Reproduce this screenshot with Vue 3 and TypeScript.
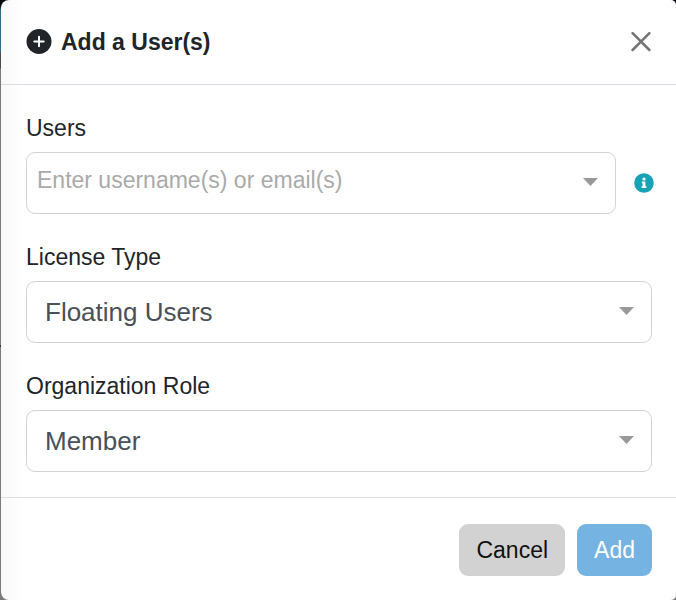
<script setup lang="ts">
import { ref } from 'vue'

const users = ref('')
const licenseType = ref('Floating Users')
const role = ref('Member')
const licenseTypes: string[] = ['Floating Users', 'Named Users']
const roles: string[] = ['Member', 'Admin']
</script>

<template>
  <div class="backdrop">
    <form class="modal" role="dialog" aria-labelledby="dialog-title" @submit.prevent>
      <header class="header">
        <svg class="plus-icon" viewBox="0 0 26 26" aria-hidden="true">
          <circle cx="13" cy="12.5" r="12.5" fill="#212529" />
          <path d="M13 7.8v9.4M8.3 12.5h9.4" stroke="#fff" stroke-width="2" stroke-linecap="round" />
        </svg>
        <h1 id="dialog-title" class="title">Add a User(s)</h1>
        <button class="close" type="button" aria-label="Close">
          <svg viewBox="0 0 20 20" aria-hidden="true">
            <path d="M1.6 1.2l16.8 16.8M18.4 1.2L1.6 18" stroke="#747474" stroke-width="2.5" stroke-linecap="round" />
          </svg>
        </button>
      </header>

      <main class="body">
        <div class="field">
          <label for="users">Users</label>
          <div class="row">
            <div class="control">
              <input id="users" v-model="users" class="box users" type="text" placeholder="Enter username(s) or email(s)" />
              <svg class="arrow" viewBox="0 0 15 8" aria-hidden="true"><path d="M0 0h15L7.5 8z" fill="#999" /></svg>
            </div>
            <svg class="info" viewBox="0 0 20 20" role="img" aria-label="Information">
              <circle cx="10" cy="10" r="9.8" fill="#17a2b8" />
              <circle cx="10" cy="6" r="1.6" fill="#fff" />
              <path d="M7.8 8.5h3.6v4.7h1v1.8H7.6v-1.8h1v-2.9h-.8z" fill="#fff" />
            </svg>
          </div>
        </div>

        <div class="field">
          <label for="license">License Type</label>
          <div class="control">
            <select id="license" v-model="licenseType" class="box">
              <option v-for="item in licenseTypes" :key="item">{{ item }}</option>
            </select>
            <svg class="arrow" viewBox="0 0 15 8" aria-hidden="true"><path d="M0 0h15L7.5 8z" fill="#999" /></svg>
          </div>
        </div>

        <div class="field">
          <label for="role">Organization Role</label>
          <div class="control">
            <select id="role" v-model="role" class="box">
              <option v-for="item in roles" :key="item">{{ item }}</option>
            </select>
            <svg class="arrow" viewBox="0 0 15 8" aria-hidden="true"><path d="M0 0h15L7.5 8z" fill="#999" /></svg>
          </div>
        </div>
      </main>

      <footer class="footer">
        <button class="btn cancel" type="button">Cancel</button>
        <button class="btn add" type="submit">Add</button>
      </footer>
    </form>
  </div>
</template>

<style>
body {
  margin: 0;
}
</style>

<style scoped>
.backdrop {
  box-sizing: border-box;
  display: flex;
  min-height: 100vh;
  padding-left: 1px;
  background: linear-gradient(#08090d 6px, #336b87 10px, #336b87 52px, #4b4b4f 53px, #4b4b4f 68px, #7b7b7b 69px, #7b7b7b 345px, #333 345px, #333 347px, #7b7b7b 347px);
  font-family: "Liberation Sans", Arial, sans-serif;
  font-size: 23px;
  color: #212529;
}
.modal {
  display: flex;
  flex: 1;
  flex-direction: column;
  min-width: 0;
  border-radius: 8px 5px 5px 8px;
  background: linear-gradient(90deg, #f9f9f9, #fff 24px);
}
.header {
  display: flex;
  align-items: center;
  gap: 9px;
  box-sizing: border-box;
  height: 85px;
  padding: 0 25px;
  border-bottom: 1px solid #d9dde3;
}
.plus-icon {
  flex: none;
  width: 26px;
  height: 26px;
}
.title {
  flex: 1;
  margin: 0;
  font-size: 23px;
  font-weight: 700;
  line-height: 34px;
}
.close {
  display: flex;
  padding: 0;
  border: 0;
  background: none;
  cursor: pointer;
}
.close svg {
  width: 20px;
  height: 20px;
}
.body {
  display: flex;
  flex: 1;
  flex-direction: column;
  gap: 26px;
  padding: 26px 24px 25px 25px;
}
.field {
  display: flex;
  flex-direction: column;
  gap: 7px;
}
label {
  line-height: 34px;
}
.row {
  display: flex;
  align-items: center;
  gap: 18px;
  margin-right: -2px;
}
.control {
  position: relative;
  display: flex;
  flex: 1;
}
.box {
  appearance: none;
  box-sizing: border-box;
  width: 100%;
  height: 62px;
  margin: 0;
  padding: 0 48px 0 18px;
  border: 1px solid #d3d3d3;
  border-radius: 9px;
  background: #fff;
  color: #495057;
  font-family: inherit;
  font-size: 26px;
}
.users {
  padding: 0 48px 6px 10px;
  font-size: 23px;
}
.users::placeholder {
  color: #aaa;
  opacity: 1;
}
.arrow {
  position: absolute;
  top: 26px;
  right: 18px;
  width: 15px;
  height: 8px;
  pointer-events: none;
}
.info {
  flex: none;
  width: 20px;
  height: 20px;
}
.footer {
  display: flex;
  justify-content: flex-end;
  gap: 12px;
  padding: 26px 24px 24px;
  border-top: 1px solid #dedfe2;
}
.btn {
  height: 52px;
  padding: 0 17px;
  border: 0;
  border-radius: 9px;
  font-family: inherit;
  font-size: 23px;
  cursor: pointer;
}
.cancel {
  background: #d2d2d2;
  color: #111;
}
.add {
  background: #74b3e2;
  color: #fff;
}
</style>
